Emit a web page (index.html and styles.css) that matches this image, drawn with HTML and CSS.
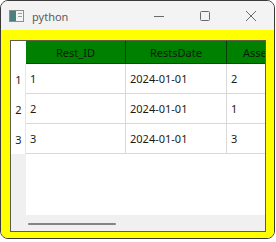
FILE: index.html
```html
<!DOCTYPE html>
<html>
<head>
<meta charset="utf-8">
<link rel="stylesheet" href="styles.css">
</head>
<body>
<div class="window">
  <div class="titlebar">
    <svg class="appicon" width="15" height="12" viewBox="0 0 15 12">
      <rect x="0.5" y="0.5" width="14" height="11" fill="#f4f4f4" stroke="#8a8f92"/>
      <rect x="1" y="1" width="6" height="10" fill="#4d7f80"/>
      <rect x="9" y="3" width="4" height="1" fill="#9aa0a3"/>
      <rect x="9" y="6" width="4" height="1" fill="#9aa0a3"/>
    </svg>
    <span class="title">python</span>
    <div class="controls">
      <div class="ctl"><svg width="12" height="12" viewBox="0 0 12 12"><path d="M1 6.5h10" stroke="#6a6a6a" stroke-width="1"/></svg></div>
      <div class="ctl"><svg width="12" height="12" viewBox="0 0 12 12"><rect x="1.5" y="1.5" width="9" height="9" rx="1" fill="none" stroke="#6a6a6a"/></svg></div>
      <div class="ctl"><svg width="12" height="12" viewBox="0 0 12 12"><path d="M1 1L11 11M11 1L1 11" stroke="#6a6a6a" stroke-width="1"/></svg></div>
    </div>
  </div>
  <div class="central">
    <div class="frame">
      <div class="hdr">
        <div class="corner"></div>
        <div class="hcell c1">Rest_ID</div>
        <div class="hcell c2">RestsDate</div>
        <div class="hcell c3">Assessment</div>
      </div>
      <div class="row">
        <div class="rh">1</div>
        <div class="cell c1">1</div>
        <div class="cell c2">2024-01-01</div>
        <div class="cell c3">2</div>
      </div>
      <div class="row">
        <div class="rh">2</div>
        <div class="cell c1">2</div>
        <div class="cell c2">2024-01-01</div>
        <div class="cell c3">1</div>
      </div>
      <div class="row">
        <div class="rh">3</div>
        <div class="cell c1">3</div>
        <div class="cell c2">2024-01-01</div>
        <div class="cell c3">3</div>
      </div>
      <div class="empty">
        <div class="rhfill"></div>
        <div class="blank"></div>
      </div>
      <div class="hscroll">
        <div class="handle"></div>
      </div>
    </div>
  </div>
</div>
</body>
</html>
```

FILE: styles.css
```css
html, body {
  margin: 0;
  padding: 0;
  background: #ffffff;
}
body {
  width: 276px;
  height: 242px;
  overflow: hidden;
  font-family: "Noto Sans", "Open Sans", sans-serif;
}
.window {
  width: 275px;
  height: 239px;
  box-sizing: border-box;
  border: 1px solid #3a3a3a;
  border-radius: 8px;
  overflow: hidden;
  display: flex;
  flex-direction: column;
  background: #f3f3f3;
}
.titlebar {
  height: 29px;
  flex: none;
  display: flex;
  align-items: center;
  padding-left: 8px;
  background: #f3f3f3;
}
.appicon {
  flex: none;
  margin-top: 1px;
}
.title {
  margin-left: 8px;
  font-size: 11px;
  color: #5c5c5c;
  margin-top: 1px;
}
.controls {
  margin-left: auto;
  display: flex;
  height: 29px;
}
.ctl {
  width: 46px;
  height: 29px;
  display: flex;
  align-items: center;
  justify-content: center;
}
.central {
  flex: 1;
  background: #ffff00;
  padding: 10px 8px 6px 9px;
  display: flex;
}
.frame {
  flex: 1;
  border: 1px solid #5e5e4a;
  background: #ffffff;
  display: flex;
  flex-direction: column;
  overflow: hidden;
  min-width: 0;
}
.hdr {
  height: 23px;
  flex: none;
  display: flex;
}
.corner {
  width: 15px;
  flex: none;
  background: #ffffff;
}
.hcell {
  flex: none;
  background: #008000;
  border-right: 1px solid #0b3d0b;
  border-bottom: 1px solid #0b4a0b;
  font-size: 11px;
  color: #0c1a0c;
  display: flex;
  align-items: center;
  justify-content: center;
  white-space: nowrap;
  overflow: hidden;
  box-sizing: border-box;
}
.c1 { width: 100px; }
.c2 { width: 101px; }
.c3 { width: 100px; }
.hcell.c1 { width: 100px; }
.hcell.c2 { width: 101px; }
.hcell.c3 { width: 100px; justify-content: flex-start; padding-left: 16px; }
.row {
  height: 30px;
  flex: none;
  display: flex;
}
.rh {
  width: 15px;
  flex: none;
  box-sizing: border-box;
  border-right: 1px solid #e6e6e6;
  font-size: 11px;
  color: #1a1a1a;
  display: flex;
  align-items: center;
  justify-content: center;
  padding-left: 1px;
}
.cell {
  flex: none;
  box-sizing: border-box;
  border-right: 1px solid #d9d9d9;
  border-bottom: 1px solid #d9d9d9;
  font-size: 11px;
  color: #1a1a1a;
  display: flex;
  align-items: center;
  padding-left: 4px;
  padding-bottom: 1px;
  white-space: nowrap;
}
.empty {
  flex: 1;
  display: flex;
}
.rhfill {
  width: 15px;
  flex: none;
  background: #f0f0f0;
}
.blank {
  flex: 1;
  background: #ffffff;
}
.hscroll {
  height: 16px;
  flex: none;
  background: #f0f0f0;
  display: flex;
  align-items: center;
  padding-left: 17px;
}
.handle {
  width: 88px;
  height: 2px;
  border-radius: 1px;
  background: #858585;
  margin-top: 1px;
}
```
